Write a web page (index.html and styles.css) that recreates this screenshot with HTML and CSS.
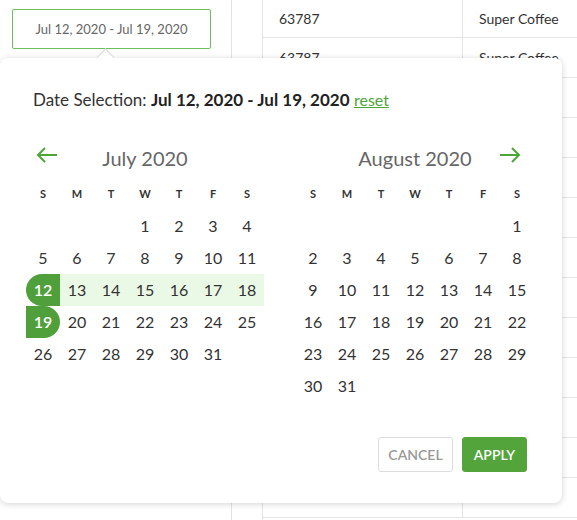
FILE: index.html
```html
<!DOCTYPE html>
<html>
<head>
<meta charset="utf-8">
<link rel="stylesheet" href="styles.css">
</head>
<body>
<div class="page">
  <div class="sidebar">
    <button class="date-input">Jul 12, 2020 - Jul 19, 2020</button>
  </div>
  <div class="table">
    <div class="row first"><div class="cell c1">63787</div><div class="cell c2">Super Coffee</div></div>
    <div class="row"><div class="cell c1">63787</div><div class="cell c2">Super Coffee</div></div>
    <div class="row"><div class="cell c1"></div><div class="cell c2"></div></div>
    <div class="row"><div class="cell c1"></div><div class="cell c2"></div></div>
    <div class="row"><div class="cell c1"></div><div class="cell c2"></div></div>
    <div class="row"><div class="cell c1"></div><div class="cell c2"></div></div>
    <div class="row"><div class="cell c1"></div><div class="cell c2"></div></div>
    <div class="row"><div class="cell c1"></div><div class="cell c2"></div></div>
    <div class="row"><div class="cell c1"></div><div class="cell c2"></div></div>
    <div class="row"><div class="cell c1"></div><div class="cell c2"></div></div>
    <div class="row"><div class="cell c1"></div><div class="cell c2"></div></div>
    <div class="row"><div class="cell c1"></div><div class="cell c2"></div></div>
    <div class="row"><div class="cell c1"></div><div class="cell c2"></div></div>
  </div>

  <div class="popover">
    <div class="caret"></div>
    <div class="title">Date Selection: <strong>Jul 12, 2020 - Jul 19, 2020</strong> <a class="reset" href="#">reset</a></div>
    <div class="months">
      <div class="month">
        <div class="month-head">
          <span class="nav prev"><svg width="22" height="16" viewBox="0 0 22 16"><path d="M21 8H2M9 1L2 8l7 7" fill="none" stroke="#4ea53a" stroke-width="2"/></svg></span>
          <span class="month-name">July 2020</span>
        </div>
        <div class="weekdays"><span>S</span><span>M</span><span>T</span><span>W</span><span>T</span><span>F</span><span>S</span></div>
        <div class="days">
          <span></span><span></span><span></span><span>1</span><span>2</span><span>3</span><span>4</span>
          <span>5</span><span>6</span><span>7</span><span>8</span><span>9</span><span>10</span><span>11</span>
          <span class="sel start">12</span><span class="range">13</span><span class="range">14</span><span class="range">15</span><span class="range">16</span><span class="range">17</span><span class="range">18</span>
          <span class="sel end">19</span><span>20</span><span>21</span><span>22</span><span>23</span><span>24</span><span>25</span>
          <span>26</span><span>27</span><span>28</span><span>29</span><span>30</span><span>31</span><span></span>
        </div>
      </div>
      <div class="month">
        <div class="month-head">
          <span class="month-name">August 2020</span>
          <span class="nav next"><svg width="22" height="16" viewBox="0 0 22 16"><path d="M1 8h19M13 1l7 7-7 7" fill="none" stroke="#4ea53a" stroke-width="2"/></svg></span>
        </div>
        <div class="weekdays"><span>S</span><span>M</span><span>T</span><span>W</span><span>T</span><span>F</span><span>S</span></div>
        <div class="days">
          <span></span><span></span><span></span><span></span><span></span><span></span><span>1</span>
          <span>2</span><span>3</span><span>4</span><span>5</span><span>6</span><span>7</span><span>8</span>
          <span>9</span><span>10</span><span>11</span><span>12</span><span>13</span><span>14</span><span>15</span>
          <span>16</span><span>17</span><span>18</span><span>19</span><span>20</span><span>21</span><span>22</span>
          <span>23</span><span>24</span><span>25</span><span>26</span><span>27</span><span>28</span><span>29</span>
          <span>30</span><span>31</span>
        </div>
      </div>
    </div>
    <div class="actions">
      <button class="btn cancel">CANCEL</button>
      <button class="btn apply">APPLY</button>
    </div>
  </div>
</div>
</body>
</html>
```

FILE: styles.css
```css
* { box-sizing: border-box; }
html, body { margin: 0; padding: 0; background: #fff; }
body {
  font-family: "Source Sans Pro", Lato, "Noto Sans", sans-serif;
  color: #333;
  width: 577px;
  height: 520px;
  overflow: hidden;
}
.page {
  position: relative;
  display: flex;
  height: 520px;
}
.sidebar {
  width: 232px;
  flex: none;
  border-right: 1px solid #e3e3e3;
  padding: 9px 0 0 12px;
}
.date-input {
  width: 199px;
  height: 40px;
  border: 1px solid #6cbf5c;
  border-radius: 2px;
  background: #fff;
  font-family: inherit;
  font-size: 13px;
  color: #666;
  text-align: center;
  padding: 0;
}
.table {
  margin-left: 30px;
  border-left: 1px solid #e3e3e3;
  flex: none;
  width: 340px;
}
.row {
  display: flex;
  height: 40px;
  border-bottom: 1px solid #e3e3e3;
  align-items: center;
}
.row.first { height: 38px; }
.cell {
  font-size: 14px;
  color: #333;
  height: 100%;
  display: flex;
  align-items: center;
}
.c1 { width: 200px; padding-left: 16px; border-right: 1px solid #e3e3e3; }
.c2 { padding-left: 16px; }

.popover {
  position: absolute;
  left: 0;
  top: 58px;
  width: 562px;
  height: 445px;
  background: #fff;
  border-radius: 8px;
  box-shadow: 0 1px 6px rgba(0,0,0,0.18);
  padding: 30px 0 0 26px;
}
.caret {
  position: absolute;
  left: 99px;
  top: -7px;
  width: 13px;
  height: 13px;
  background: #fff;
  border-top: 1px solid #d9d9d9;
  border-left: 1px solid #d9d9d9;
  transform: rotate(45deg);
}
.title {
  font-size: 17px;
  line-height: 24px;
  color: #333;
  padding-left: 7px;
}
.title strong { font-weight: 700; color: #222; }
.reset { color: #4ea53a; font-size: 16px; }

.months {
  display: flex;
  gap: 32px;
  margin-top: 26px;
}
.month { width: 238px; }
.month-head {
  position: relative;
  height: 36px;
  display: flex;
  align-items: center;
  justify-content: center;
}
.month-name {
  font-size: 20px;
  color: #666;
  padding-top: 3px;
}
.nav {
  position: absolute;
  top: 9px;
  display: flex;
}
.nav.prev { left: 10px; }
.nav.next { left: 203px; }

.weekdays, .days {
  display: grid;
  grid-template-columns: repeat(7, 34px);
}
.weekdays {
  margin-top: 8px;
  height: 24px;
}
.weekdays span {
  font-size: 11px;
  font-weight: 700;
  text-align: center;
  line-height: 24px;
  color: #333;
}
.days {
  margin-top: 4px;
  grid-auto-rows: 32px;
}
.days span {
  font-size: 16px;
  text-align: center;
  line-height: 32px;
  color: #333;
}
.days .range { background: #eaf8e6; }
.days .sel { background: #4f9f3b; color: #fff; font-weight: 600; }
.days .start { border-radius: 16px 0 0 16px; }
.days .end { border-radius: 0 16px 16px 0; }

.actions {
  display: flex;
  justify-content: flex-end;
  gap: 9px;
  width: 501px;
  margin-top: 35px;
}
.btn {
  height: 35px;
  border-radius: 3px;
  font-family: inherit;
  font-size: 14px;
  font-weight: 600;
  padding: 0;
}
.cancel {
  width: 75px;
  background: #fff;
  border: 1px solid #ddd;
  color: #999;
}
.apply {
  width: 65px;
  background: #52a43b;
  border: 1px solid #52a43b;
  color: #fff;
}
```
